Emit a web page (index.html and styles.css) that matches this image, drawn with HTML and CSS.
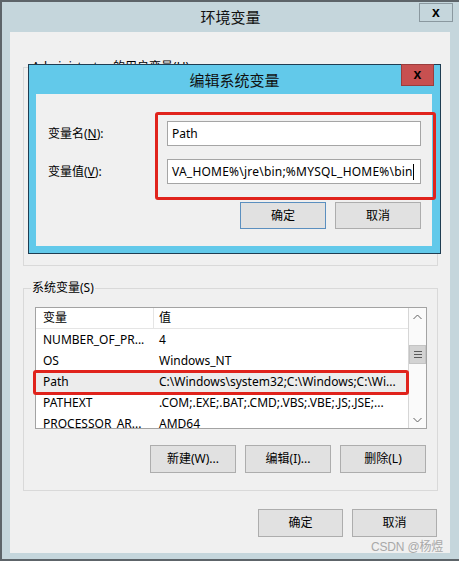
FILE: index.html
```html
<!DOCTYPE html>
<html lang="zh-CN">
<head>
<meta charset="utf-8">
<title>环境变量</title>
<link rel="stylesheet" href="styles.css">
</head>
<body>
<div class="window">
  <div class="titlebar">
    <span class="title">环境变量</span>
    <span class="win-close">x</span>
  </div>
  <div class="panel">
    <fieldset class="group user-group">
      <legend>Administrator 的用户变量(U)</legend>
    </fieldset>
    <fieldset class="group sys-group">
      <legend>系统变量(S)</legend>
      <div class="listbox">
        <div class="list-main">
          <div class="list-head">
            <div class="cell col1">变量</div>
            <div class="cell col2">值</div>
          </div>
          <div class="row"><div class="cell col1">NUMBER_OF_PR...</div><div class="cell col2">4</div></div>
          <div class="row"><div class="cell col1">OS</div><div class="cell col2">Windows_NT</div></div>
          <div class="row selected"><div class="cell col1">Path</div><div class="cell col2">C:\Windows\system32;C:\Windows;C:\Wi...</div></div>
          <div class="row"><div class="cell col1">PATHEXT</div><div class="cell col2">.COM;.EXE;.BAT;.CMD;.VBS;.VBE;.JS;.JSE;...</div></div>
          <div class="row"><div class="cell col1">PROCESSOR_AR...</div><div class="cell col2">AMD64</div></div>
        </div>
        <div class="scrollbar">
          <div class="sb-btn"><svg width="9" height="6" viewBox="0 0 9 6"><polyline points="0.5,5 4.5,1 8.5,5" fill="none" stroke="#606060" stroke-width="1"/></svg></div>
          <div class="sb-track"><div class="thumb"><svg width="8" height="7" viewBox="0 0 8 7"><path d="M0 0.5H8M0 3.5H8M0 6.5H8" stroke="#5a5a5a" stroke-width="1"/></svg></div></div>
          <div class="sb-btn"><svg width="9" height="6" viewBox="0 0 9 6"><polyline points="0.5,1 4.5,5 8.5,1" fill="none" stroke="#606060" stroke-width="1"/></svg></div>
        </div>
      </div>
      <div class="btn-row sys-btns">
        <div class="btn">新建(W)...</div>
        <div class="btn">编辑(I)...</div>
        <div class="btn">删除(L)</div>
      </div>
    </fieldset>
    <div class="btn-row main-btns">
      <div class="btn wide">确定</div>
      <div class="btn wide">取消</div>
    </div>
    <div class="watermark">CSDN @杨煜</div>
  </div>

  <div class="dialog">
    <div class="dlg-title">
      <span class="title">编辑系统变量</span>
      <span class="dlg-close">x</span>
    </div>
    <div class="dlg-body">
      <div class="form">
        <label class="lbl">变量名(<u>N</u>):</label>
        <div class="input">Path</div>
        <label class="lbl">变量值(<u>V</u>):</label>
        <div class="input value"><span class="val-text">VA_HOME%\jre\bin;%MYSQL_HOME%\bin</span><span class="caret"></span></div>
      </div>
      <div class="btn-row dlg-btns">
        <div class="btn default">确定</div>
        <div class="btn">取消</div>
      </div>
    </div>
  </div>

  <div class="mark mark-form"></div>
  <div class="mark mark-row"></div>
</div>
</body>
</html>
```
FILE: styles.css
```css
* { box-sizing: border-box; }
html, body { margin: 0; padding: 0; background: #ffffff; }
body {
  font-family: "Noto Sans", "Noto Sans CJK SC", sans-serif;
  font-size: 12px;
  color: #000;
}

.window {
  position: relative;
  width: 459px;
  height: 561px;
  background: #c5d6dc;
  border-top: 2px solid #5d6469;
  border-left: 2px solid #5d6469;
  border-bottom: 2px solid #5d6469;
}

.titlebar {
  height: 30px;
  display: grid;
  grid-template-columns: 1fr auto 1fr;
  align-items: center;
}
.titlebar .title {
  grid-column: 2;
  font-size: 15px;
  line-height: 20px;
  color: #111;
}
.win-close {
  grid-column: 3;
  justify-self: end;
  align-self: start;
  margin-top: 1px;
  margin-right: 6px;
  width: 34px;
  height: 19px;
  border: 1px solid #8a989f;
  display: flex;
  align-items: center;
  justify-content: center;
  font: bold 14px/1 "Liberation Sans", sans-serif;
  padding-bottom: 2px;
}

.panel {
  position: relative;
  margin-left: 8px;
  width: 440px;
  height: 521px;
  background: #f0f0f0;
  padding: 26px 12px 0 13px;
}

.group {
  margin: 0;
  border: 1px solid #d9d9d9;
  padding: 11px 10px 17px 11px;
  min-width: 0;
}
.group legend {
  margin-left: -4px;
  padding: 0 1px;
  line-height: 16px;
  font-size: 12px;
}
.user-group { height: 208px; }
.user-group legend { line-height: 18px; margin-top: -1px; }
.sys-group { margin-top: 14px; height: 211px; }

.listbox {
  height: 122px;
  border: 1px solid #a3a3a3;
  background: #fff;
  display: flex;
}
.list-main {
  flex: 1;
  overflow: hidden;
}
.list-head, .row {
  display: grid;
  grid-template-columns: 118px 1fr;
  align-items: center;
}
.list-head {
  height: 21px;
  border-bottom: 1px solid #e5e5e5;
}
.list-head .col1 { border-right: 1px solid #e5e5e5; height: 20px; }
.row { height: 21px; }
.row.selected { background: #ececec; }
.cell {
  line-height: 20px;
  white-space: nowrap;
  overflow: hidden;
}
.col1 { padding-left: 7px; }
.col2 { padding-left: 5px; }
.row .cell { line-height: 21px; }

.scrollbar {
  width: 18px;
  border-left: 1px solid #d6d6d6;
  display: flex;
  flex-direction: column;
  background: #fafafa;
}
.sb-btn {
  height: 17px;
  display: flex;
  align-items: center;
  justify-content: center;
}
.sb-track {
  flex: 1;
  padding-top: 20px;
}
.thumb {
  height: 19px;
  background: #d3d3d3;
  border: 1px solid #c4c4c4;
  display: flex;
  align-items: center;
  justify-content: center;
}

.btn-row {
  display: flex;
  justify-content: flex-end;
  gap: 9px;
}
.btn {
  width: 86px;
  height: 28px;
  background: #e1e1e1;
  border: 1px solid #adadad;
  display: flex;
  align-items: center;
  justify-content: center;
  font-size: 12px;
  line-height: 16px;
}
.btn.wide { width: 85px; }
.btn.default { border-color: #5b8fbf; }
.sys-btns { margin-top: 16px; padding-right: 1px; }
.main-btns { margin-top: 18px; padding-right: 1px; }

.watermark {
  position: absolute;
  right: 7px;
  top: 508px;
  font-family: "Liberation Sans", "Noto Sans CJK SC", sans-serif;
  font-size: 12px;
  line-height: 14px;
  color: #a8a8a8;
  letter-spacing: -0.2px;
}

.dialog {
  position: absolute;
  left: 26px;
  top: 62px;
  width: 413px;
  height: 190px;
  border: 1px solid #1f3d52;
  background: #62c9ea;
}
.dlg-title {
  height: 29px;
  display: grid;
  grid-template-columns: 1fr auto 1fr;
  align-items: center;
}
.dlg-title .title {
  grid-column: 2;
  font-size: 15px;
  line-height: 20px;
  color: #111;
}
.dlg-close {
  grid-column: 3;
  justify-self: end;
  align-self: start;
  margin-top: -1px;
  margin-right: 6px;
  width: 33px;
  height: 22px;
  background: #c75050;
  border: 1px solid #9a3d3d;
  display: flex;
  align-items: center;
  justify-content: center;
  font: bold 14px/1 "Liberation Sans", sans-serif;
  padding-bottom: 2px;
}
.dlg-body {
  margin: 0 8px 0 7px;
  height: 152px;
  background: #f0f0f0;
  padding: 27px 11px 0 12px;
}
.form {
  display: grid;
  grid-template-columns: 119px 254px;
  row-gap: 13px;
  align-items: center;
}
.lbl { line-height: 16px; }
.input {
  height: 25px;
  border: 1px solid #a5a5a5;
  background: #fff;
  padding: 0 4px;
  line-height: 23px;
  white-space: nowrap;
  overflow: hidden;
  display: flex;
  align-items: center;
}
.input.value { letter-spacing: 0.22px; }
.caret {
  display: inline-block;
  width: 1px;
  height: 16px;
  background: #000;
  flex: none;
}
.dlg-btns { margin-top: 18px; }
.dlg-btns .btn { height: 27px; }

.mark {
  position: absolute;
  border: 3px solid #e0231c;
  border-radius: 3px;
}
.mark-form { left: 153px; top: 110px; width: 281px; height: 88px; }
.mark-row { left: 31px; top: 368px; width: 376px; height: 25px; }
```
